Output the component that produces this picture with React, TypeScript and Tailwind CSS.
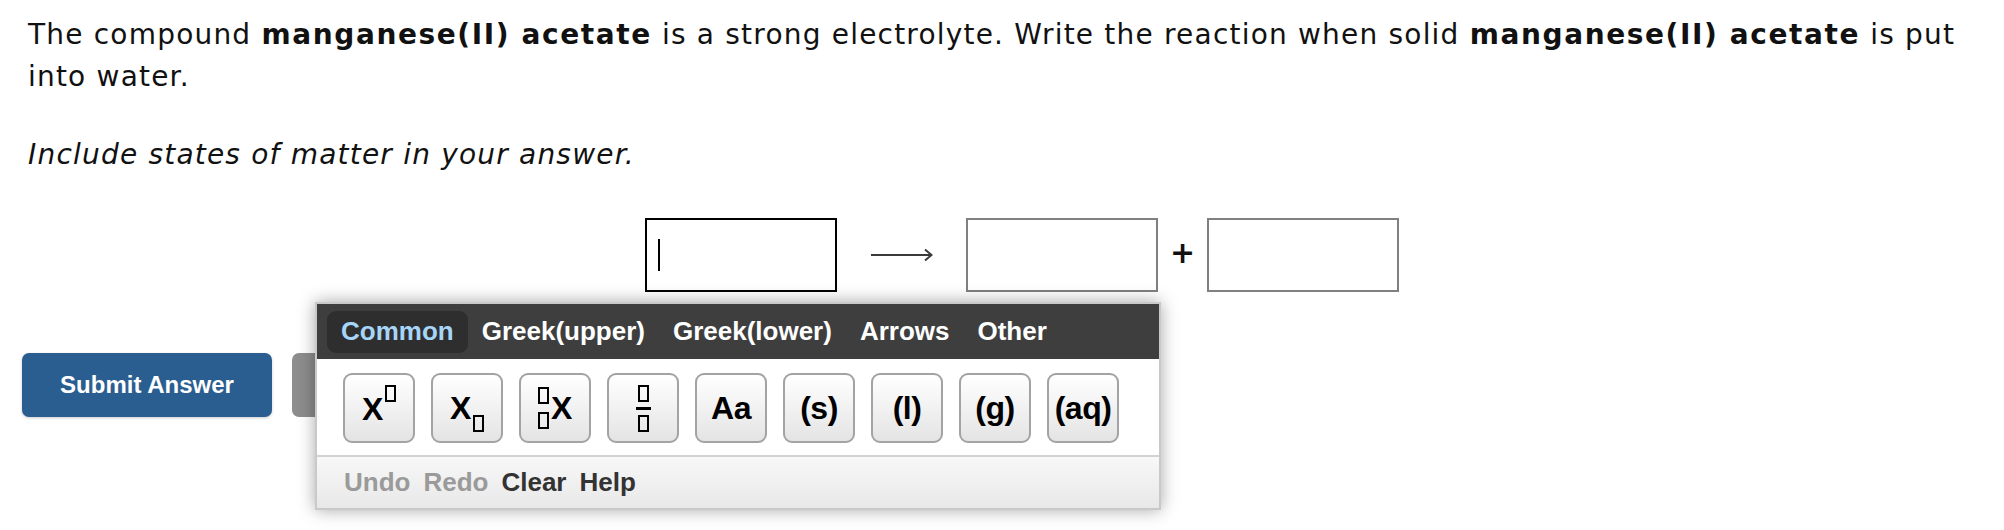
import React from 'react';

const Slot: React.FC<{ className?: string }> = ({ className = '' }) => (
  <span className={`inline-block w-[11px] h-[17px] border-2 border-black ${className}`} />
);

const tabs = ['Common', 'Greek(upper)', 'Greek(lower)', 'Arrows', 'Other'];

const PaletteButton: React.FC<{ children: React.ReactNode }> = ({ children }) => (
  <button className="w-[72px] h-[70px] flex items-center justify-center rounded-[9px] border-2 border-[#a3a3a3] bg-gradient-to-b from-white to-[#e4e4e4] text-[32px] font-bold text-black leading-none tracking-[-0.5px]">
    {children}
  </button>
);

const Palette: React.FC = () => (
  <div className="absolute left-[315px] top-[302px] w-[846px] border-2 border-[#c9c9c9] bg-white shadow-[0_0_16px_rgba(0,0,0,0.35)] font-['Liberation_Sans',Arial,sans-serif]">
    {/* tab strip */}
    <div className="h-[55px] bg-[#3e3e3e] flex items-center pl-[10px]">
      {tabs.map((t, i) => (
        <div
          key={t}
          className={`h-[42px] px-[14px] flex items-center rounded-[9px] text-[26px] font-bold ${
            i === 0 ? 'bg-[#2e2e2e] text-[#a6d5f8]' : 'text-white'
          }`}
        >
          {t}
        </div>
      ))}
    </div>

    {/* symbol buttons */}
    <div className="flex gap-[16px] pl-[26px] pt-[14px] pb-[12px]">
      <PaletteButton>
        <span className="flex items-start">
          <span className="mt-[2px]">X</span>
          <Slot className="ml-[2px] -mt-[6px]" />
        </span>
      </PaletteButton>
      <PaletteButton>
        <span className="flex items-end">
          <span>X</span>
          <Slot className="ml-[2px] -mb-[8px]" />
        </span>
      </PaletteButton>
      <PaletteButton>
        <span className="flex items-center">
          <span className="flex flex-col gap-[8px] mr-[2px]">
            <Slot />
            <Slot />
          </span>
          <span>X</span>
        </span>
      </PaletteButton>
      <PaletteButton>
        <span className="flex flex-col items-center">
          <Slot />
          <span className="w-[15px] h-[3px] bg-black my-[5px]" />
          <Slot />
        </span>
      </PaletteButton>
      <PaletteButton>Aa</PaletteButton>
      <PaletteButton>(s)</PaletteButton>
      <PaletteButton>(l)</PaletteButton>
      <PaletteButton>(g)</PaletteButton>
      <PaletteButton>(aq)</PaletteButton>
    </div>

    {/* undo / redo footer */}
    <div className="h-[53px] border-t-2 border-[#d2d2d2] bg-gradient-to-b from-[#f8f8f8] to-[#e8e8e8] flex items-center pl-[27px] gap-[13px] text-[26px] font-bold">
      <span className="text-[#9a9a9a]">Undo</span>
      <span className="text-[#9a9a9a]">Redo</span>
      <span className="text-[#333]">Clear</span>
      <span className="text-[#333]">Help</span>
    </div>
  </div>
);

const AnswerBox: React.FC<{ active?: boolean }> = ({ active }) => (
  <div
    className={`w-[192px] h-[74px] border-2 bg-white flex items-center pl-[11px] ${
      active ? 'border-black' : 'border-[#808080]'
    }`}
  >
    {active && <span className="w-[2px] h-[32px] bg-black" />}
  </div>
);

export default function App() {
  return (
    <div className="relative w-[2004px] h-[530px] bg-white overflow-hidden text-[#111]">
      <div className="pt-[14px] pl-[28px] pr-[24px] text-[28px] leading-[42px] tracking-[1.2px] font-['DejaVu_Sans',Verdana,sans-serif]">
        <p>
          The compound <b className="tracking-[1.6px]">manganese(II) acetate</b> is a strong electrolyte. Write the
          reaction when solid <b className="tracking-[1.6px]">manganese(II) acetate</b> is put into water.
        </p>
        <p className="mt-[36px] italic">Include states of matter in your answer.</p>
      </div>

      <div className="mt-[42px] ml-[645px] flex items-center">
        <AnswerBox active />
        <svg className="ml-[34px] mr-[33px]" width="62" height="16" viewBox="0 0 62 16">
          <line x1="0" y1="8" x2="60" y2="8" stroke="#3a3a3a" strokeWidth="2.2" />
          <path d="M54 2.5 L60.5 8 L54 13.5" fill="none" stroke="#3a3a3a" strokeWidth="2" />
        </svg>
        <AnswerBox />
        <span className="mx-[12px] -mt-[4px] text-[30px] font-bold leading-none font-['DejaVu_Sans',Verdana,sans-serif]">
          +
        </span>
        <AnswerBox />
      </div>

      <div className="mt-[61px] ml-[22px] flex gap-[20px] font-['Liberation_Sans',Arial,sans-serif]">
        <button className="w-[250px] h-[64px] rounded-[7px] bg-[#2a5e90] text-white text-[24px] font-bold shadow-[0_1px_3px_rgba(0,0,0,0.2)]">
          Submit Answer
        </button>
        <button className="w-[250px] h-[64px] rounded-[7px] bg-[#8d8d8d]" aria-label="Try Another Version" />
      </div>

      <Palette />
    </div>
  );
}
